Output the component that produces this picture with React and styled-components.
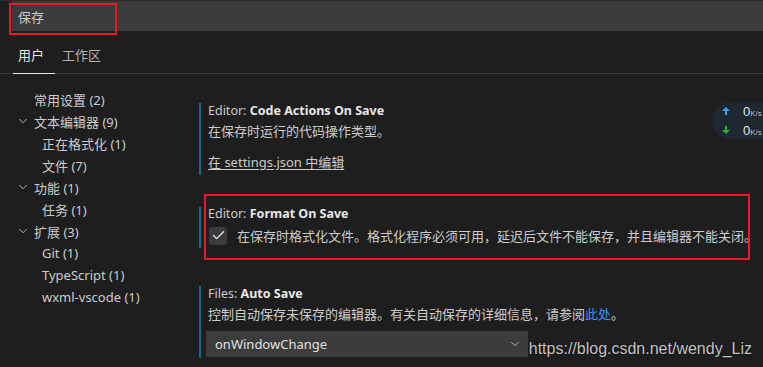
import styled, { createGlobalStyle } from "styled-components";
import { ChevronDown, Check } from "lucide-react";

const GlobalStyle = createGlobalStyle`
	html, body {
		margin: 0;
		background: #1e1e1e;
		overflow: hidden;
	}
	body {
		font-family: "Noto Sans", "Noto Sans CJK SC", sans-serif;
		font-size: 13px;
		color: #cccccc;
	}
`;

const Page = styled.div`
	position: relative;
	width: 763px;
	height: 367px;
	border-top: 1px solid #2b2b2b;
	box-sizing: border-box;
`;

const SearchRow = styled.div`
	position: relative;
	padding-left: 12px;
`;

const SearchBox = styled.div`
	height: 30px;
	background: #3c3c3c;
	display: flex;
	align-items: center;
	padding-left: 6px;
	font-family: "Noto Sans CJK SC", sans-serif;
	font-size: 13px;
	color: #cccccc;
`;

const Highlight = styled.div`
	position: absolute;
	border: 2px solid #e81b23;
	box-sizing: border-box;
	pointer-events: none;
	top: ${(p) => p.$top}px;
	left: ${(p) => p.$left}px;
	width: ${(p) => p.$width}px;
	height: ${(p) => p.$height}px;
`;

const TabBar = styled.div`
	display: flex;
	gap: 2px;
	padding-left: 13px;
	border-bottom: 1px solid #3a3a3a;
	box-sizing: border-box;
	height: 43px;
`;

const Tab = styled.div`
	display: flex;
	align-items: center;
	padding: 4px 11px 0 5px;
	font-family: "Noto Sans CJK SC", sans-serif;
	font-size: 13px;
	color: ${(p) => (p.$active ? "#e7e7e7" : "#b4b4b4")};
	border-bottom: 1px solid ${(p) => (p.$active ? "#e7e7e7" : "transparent")};
	margin-bottom: -1px;
`;

const Body = styled.div`
	display: grid;
	grid-template-columns: 199px 1fr;
`;

const Sidebar = styled.div`
	padding-top: 14px;
	display: flex;
	flex-direction: column;
`;

const TreeItem = styled.div`
	height: 22px;
	display: flex;
	align-items: center;
	padding-left: ${(p) => (p.$level ? 42 : 16)}px;
	white-space: nowrap;
	color: #cccccc;
`;

const Twist = styled.span`
	width: 18px;
	display: flex;
	align-items: center;
	color: #c5c5c5;
`;

const Content = styled.div`
	display: flex;
	flex-direction: column;
	padding-top: 29px;
`;

const Setting = styled.div`
	position: relative;
	border-left: 2px solid ${(p) => p.$edge};
	padding: 0 0 ${(p) => p.$pb}px 7px;
	margin-top: ${(p) => p.$mt}px;
`;

const Title = styled.div`
	line-height: ${(p) => p.$lh}px;
	font-size: 12.5px;
	color: #cccccc;
	white-space: nowrap;

	b {
		color: #e7e7e7;
		font-weight: 700;
	}
`;

const Desc = styled.div`
	line-height: 20px;
	margin-top: 2px;
	white-space: nowrap;
	font-family: "Noto Sans CJK SC", sans-serif;
`;

const EditLink = styled.a`
	display: inline-block;
	margin-top: 11px;
	line-height: 20px;
	color: #cccccc;
	text-decoration: underline;
	text-underline-offset: 2px;
	font-family: "Noto Sans", "Noto Sans CJK SC", sans-serif;
`;

const BlueLink = styled.span`
	color: #3794ff;
`;

const CheckRow = styled.div`
	display: flex;
	align-items: center;
	gap: 10px;
	margin-top: 5px;
	margin-left: 1px;
	white-space: nowrap;
	font-family: "Noto Sans CJK SC", sans-serif;
`;

const CheckBox = styled.div`
	width: 18px;
	height: 18px;
	border-radius: 3px;
	background: #3c3c3c;
	display: flex;
	align-items: center;
	justify-content: center;
	color: #e7e7e7;
	flex: none;
`;

const Select = styled.div`
	margin-top: 7px;
	margin-left: -2px;
	width: 322px;
	height: 26px;
	background: #3c3c3c;
	display: flex;
	align-items: center;
	justify-content: space-between;
	padding: 0 6px 0 9px;
	box-sizing: border-box;
	color: #e0e0e0;
`;

const Watermark = styled.div`
	position: absolute;
	right: 11px;
	bottom: 9px;
	font-family: "Liberation Sans", Arial, sans-serif;
	font-size: 16px;
	color: #c4c4c4;
	text-shadow: 0 0 2px #000;
`;

const NetWidget = styled.div`
	position: absolute;
	top: 101px;
	right: 0;
	width: 51px;
	height: 37px;
	background: #1f2731;
	border-radius: 19px 0 0 19px;
	display: flex;
	flex-direction: column;
	justify-content: center;
	gap: 5px;
	padding-left: 10px;
	box-sizing: border-box;
`;

const NetRow = styled.div`
	display: flex;
	align-items: center;
	gap: 13px;
	height: 14px;
	font-family: "Liberation Sans", Arial, sans-serif;
	font-size: 13px;
	color: #e6e6e6;

	small {
		font-size: 8px;
		color: #bbb;
	}
`;

function Arrow({ up, color }) {
	return (
		<svg width="8" height="8" viewBox="0 0 8 8">
			<path
				d={up ? "M4 0 L8 4 H5 V8 H3 V4 H0 Z" : "M4 8 L8 4 H5 V0 H3 V4 H0 Z"}
				fill={color}
			/>
		</svg>
	);
}

const tree = [
	{ label: "常用设置", count: 2, level: 0, open: null },
	{ label: "文本编辑器", count: 9, level: 0, open: true },
	{ label: "正在格式化", count: 1, level: 1 },
	{ label: "文件", count: 7, level: 1 },
	{ label: "功能", count: 1, level: 0, open: true },
	{ label: "任务", count: 1, level: 1 },
	{ label: "扩展", count: 3, level: 0, open: true },
	{ label: "Git", count: 1, level: 1 },
	{ label: "TypeScript", count: 1, level: 1 },
	{ label: "wxml-vscode", count: 1, level: 1 },
];

export default function App() {
	return (
		<Page>
			<GlobalStyle />
			<SearchRow>
				<SearchBox>保存</SearchBox>
				<Highlight $top={2} $left={9} $width={108} $height={32} />
			</SearchRow>
			<TabBar>
				<Tab $active>用户</Tab>
				<Tab>工作区</Tab>
			</TabBar>
			<Body>
				<Sidebar>
					{tree.map((t) => (
						<TreeItem key={t.label} $level={t.level}>
							{t.level === 0 && (
								<Twist>{t.open && <ChevronDown size={14} strokeWidth={1.5} />}</Twist>
							)}
							{t.label}&nbsp;({t.count})
						</TreeItem>
					))}
				</Sidebar>
				<Content>
					<Setting $edge="#0f6a8f" $mt={0} $pb={3}>
						<Title $lh={16}>
							Editor: <b>Code Actions On Save</b>
						</Title>
						<Desc>在保存时运行的代码操作类型。</Desc>
						<EditLink>在 settings.json 中编辑</EditLink>
					</Setting>
					<Setting $edge="#1d6b80" $mt={32} $pb={3}>
						<Highlight $top={-13} $left={3} $width={546} $height={66} />
						<Title $lh={14}>
							Editor: <b>Format On Save</b>
						</Title>
						<CheckRow>
							<CheckBox>
								<Check size={15} strokeWidth={2} />
							</CheckBox>
							在保存时格式化文件。格式化程序必须可用，延迟后文件不能保存，并且编辑器不能关闭。
						</CheckRow>
					</Setting>
					<Setting $edge="#0f6a8f" $mt={38} $pb={1}>
						<Title $lh={16}>
							Files: <b>Auto Save</b>
						</Title>
						<Desc>
							控制自动保存未保存的编辑器。有关自动保存的详细信息，请参阅<BlueLink>此处</BlueLink>。
						</Desc>
						<Select>
							onWindowChange
							<ChevronDown size={14} strokeWidth={1.5} color="#c5c5c5" />
						</Select>
					</Setting>
				</Content>
			</Body>
			<NetWidget>
				<NetRow>
					<Arrow up color="#3aa4e8" />
					<span>
						0<small>K/s</small>
					</span>
				</NetRow>
				<NetRow>
					<Arrow color="#27b33a" />
					<span>
						0<small>K/s</small>
					</span>
				</NetRow>
			</NetWidget>
			<Watermark>https://blog.csdn.net/wendy_Liz</Watermark>
		</Page>
	);
}
